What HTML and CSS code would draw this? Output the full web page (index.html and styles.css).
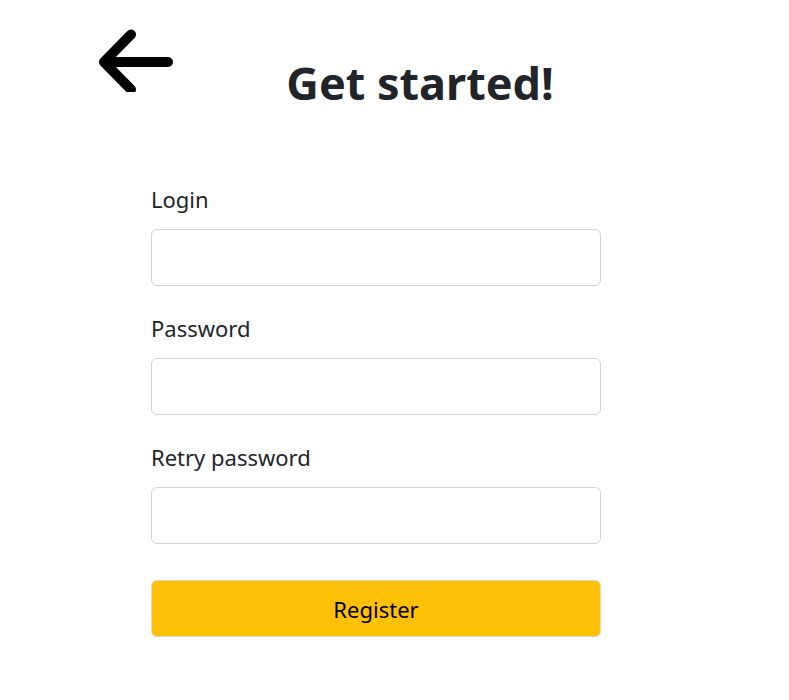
FILE: index.html
```html
<!DOCTYPE html>
<html lang="en">
<head>
<meta charset="utf-8">
<title>Get started!</title>
<link rel="stylesheet" href="styles.css">
</head>
<body>
<header class="top">
  <a class="back" href="#" aria-label="Back">
    <svg width="84" height="72" viewBox="0 0 84 72" aria-hidden="true">
      <path d="M12 42 H76 M39 14.5 L12 42 L39 69.5" fill="none" stroke="#000" stroke-width="10" stroke-linecap="round" stroke-linejoin="round"/>
    </svg>
  </a>
  <h1 class="title">Get started!</h1>
</header>
<form class="form">
  <label class="label" for="login">Login</label>
  <input class="input" id="login" type="text">
  <label class="label" for="pw">Password</label>
  <input class="input" id="pw" type="password">
  <label class="label" for="pw2">Retry password</label>
  <input class="input" id="pw2" type="password">
  <button class="btn" type="button">Register</button>
</form>
</body>
</html>
```
FILE: styles.css
```css
* { box-sizing: border-box; }
body {
  margin: 0;
  font-family: "Noto Sans", "Open Sans", sans-serif;
  color: #212529;
  background: #fff;
}
.top {
  display: flex;
  align-items: flex-start;
  padding: 0 125px 0 92px;
}
.back {
  display: block;
  width: 84px;
  height: 72px;
  margin-top: 20px;
}
.back svg { display: block; }
.title {
  flex: 1;
  margin: 56px 0 0;
  text-align: center;
  font-size: 45px;
  font-weight: 700;
  line-height: 1.2;
}
.form {
  display: flex;
  flex-direction: column;
  width: 450px;
  margin: 71px 0 0 151px;
}
.label {
  font-size: 22px;
  line-height: 36px;
  margin-bottom: 12px;
}
.input {
  height: 57px;
  border: 1px solid #ced4da;
  border-radius: 6px;
  margin-bottom: 24px;
  font: inherit;
  padding: 0 18px;
}
.btn {
  margin-top: 12px;
  height: 57px;
  background: #ffc107;
  border: 1px solid #e3d9b8;
  border-radius: 6px;
  font-family: inherit;
  font-size: 22px;
  color: #000;
}
```
